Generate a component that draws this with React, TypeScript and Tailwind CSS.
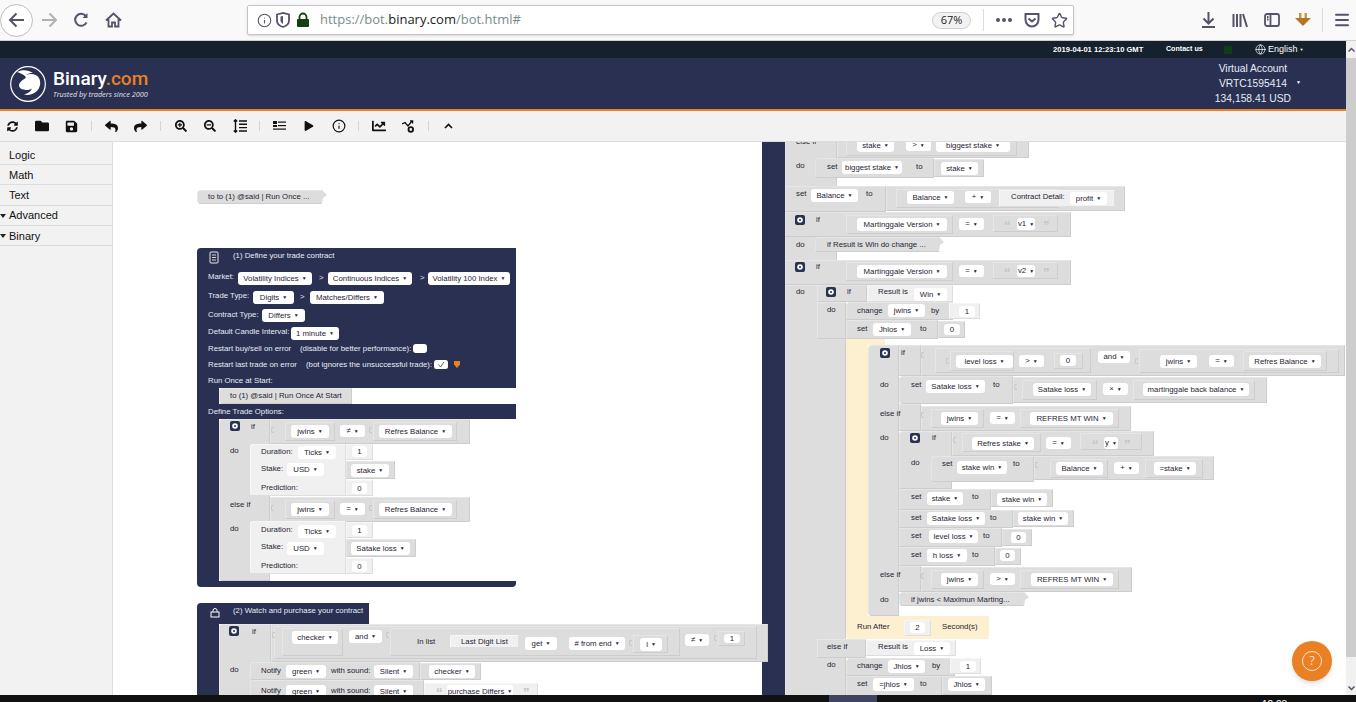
import type { ReactNode } from "react";
import { Info, Star, Menu, Globe } from "lucide-react";
import {
  FaSyncAlt,
  FaFolder,
  FaSave,
  FaReply,
  FaShare,
  FaSearchPlus,
  FaSearchMinus,
  FaPlay,
  FaChartLine,
} from "react-icons/fa";

type BlockNode =
  | { kind: "gray" | "light" | "navy" | "yellow"; x: number; y: number; x2: number; y2: number; cls?: string }
  | { kind: "field"; x: number; y: number; x2: number; text: string; h: number; plain?: boolean }
  | { kind: "text"; x: number; y: number; text: string; cls?: string }
  | { kind: "gear" | "socket" | "jag"; x: number; y: number; fill?: string };

const OX = 113;
const OY = 142;

function gray(x: number, y: number, x2: number, y2: number, cls?: string): BlockNode {
  return { kind: "gray", x, y, x2, y2, cls };
}
function light(x: number, y: number, x2: number, y2: number, cls?: string): BlockNode {
  return { kind: "light", x, y, x2, y2, cls };
}
function navy(x: number, y: number, x2: number, y2: number, cls?: string): BlockNode {
  return { kind: "navy", x, y, x2, y2, cls };
}
function field(x: number, x2: number, y: number, text: string, h = 13): BlockNode {
  return { kind: "field", x, x2, y, text, h };
}
function num(x: number, x2: number, y: number, text: string, h = 11): BlockNode {
  return { kind: "field", x, x2, y, text, h, plain: true };
}
function t(x: number, y: number, text: string, cls?: string): BlockNode {
  return { kind: "text", x, y, text, cls };
}
function w(x: number, y: number, text: string): BlockNode {
  return t(x, y, text, "text-[#e6edf5]");
}
function q(x: number, y: number, text: string): BlockNode {
  return t(x, y + 3, text, "text-[#c4c4c4] font-bold text-[13px]!");
}
function gear(x: number, y: number): BlockNode {
  return { kind: "gear", x, y };
}
function socket(x: number, y: number): BlockNode {
  return { kind: "socket", x, y };
}
function jag(x: number, y: number, fill = "#dddddd"): BlockNode {
  return { kind: "jag", x, y, fill };
}

const compareRow = (y: number, op: string): BlockNode[] => [
  gray(270, y, 470, y + 25),
  socket(271, y + 8),
  gray(285, y + 3, 335, y + 22),
  field(291, 329, y + 6, "jwins"),
  field(340, 365, y + 6, op, 12),
  socket(369, y + 8),
  gray(373, y + 3, 457, y + 22),
  field(379, 452, y + 6, "Refres Balance"),
];

const leftNodes: BlockNode[] = [
  // column of the block that sits behind the long if row
  navy(762, 130, 785, 700),

  // loose collapsed block
  gray(197, 190, 322, 204, "rounded-l-[4px]"),
  jag(321, 190),
  t(208, 197, "to to (1) @said | Run Once ..."),

  // (1) define contract
  navy(197, 248, 516, 388, "rounded-tl-[4px]"),
  navy(197, 388, 219, 581),
  navy(197, 404, 516, 419),
  navy(197, 581, 516, 587, "rounded-b-[4px]"),
  w(233, 256, "(1) Define your trade contract"),
  w(208, 277, "Market:"),
  field(238, 312, 272, "Volatility Indices"),
  w(319, 278, ">"),
  field(328, 412, 272, "Continuous Indices"),
  w(420, 278, ">"),
  field(428, 510, 272, "Volatility 100 Index"),
  w(208, 296, "Trade Type:"),
  field(253, 294, 291, "Digits"),
  w(300, 297, ">"),
  field(310, 384, 291, "Matches/Differs"),
  w(208, 315, "Contract Type:"),
  field(262, 305, 309, "Differs"),
  w(208, 332, "Default Candle Interval:"),
  field(291, 339, 327, "1 minute"),
  w(208, 349, "Restart buy/sell on error"),
  w(300, 349, "(disable for better performance):"),
  w(208, 365, "Restart last trade on error"),
  w(306, 365, "(bot ignores the unsuccessful trade):"),
  w(208, 381, "Run Once at Start:"),
  gray(219, 388, 352, 404, "rounded-l-[4px]"),
  t(230, 396, "to (1) @said | Run Once At Start"),
  w(208, 412, "Define Trade Options:"),

  // if block inside options
  gray(219, 419, 270, 581, "rounded-l-[4px]"),
  gear(235, 426),
  t(251, 427, "if"),
  ...compareRow(419, "≠"),
  t(230, 451, "do"),
  light(250, 444, 346, 496, "rounded-l-[3px]"),
  t(261, 452, "Duration:"),
  field(298, 336, 446, "Ticks"),
  light(346, 444, 373, 460),
  num(352, 367, 446, "1"),
  t(261, 469, "Stake:"),
  field(287, 324, 463, "USD"),
  gray(346, 461, 395, 479),
  field(351, 389, 464, "stake"),
  t(261, 488, "Prediction:"),
  light(346, 480, 373, 496),
  num(352, 367, 483, "0"),
  t(230, 505, "else if"),
  ...compareRow(497, "="),
  t(230, 529, "do"),
  light(250, 521, 346, 574, "rounded-l-[3px]"),
  t(261, 530, "Duration:"),
  field(298, 336, 525, "Ticks"),
  light(346, 522, 373, 538),
  num(352, 367, 525, "1"),
  t(261, 547, "Stake:"),
  field(287, 324, 542, "USD"),
  gray(346, 539, 416, 557),
  field(351, 410, 542, "Satake loss"),
  t(261, 566, "Prediction:"),
  light(346, 558, 373, 574),
  num(352, 367, 561, "0"),

  // (2) watch and purchase
  navy(197, 603, 369, 624, "rounded-tl-[4px]"),
  navy(197, 624, 219, 700),
  w(233, 611, "(2) Watch and purchase your contract"),
  gray(219, 624, 271, 700, "rounded-tl-[4px]"),
  gear(234, 631),
  t(252, 632, "if"),
  gray(271, 624, 768, 662),
  gray(274, 626, 757, 659),
  socket(272, 632),
  gray(282, 628, 343, 656),
  field(292, 338, 631, "checker"),
  field(349, 382, 630, "and"),
  socket(386, 632),
  gray(390, 628, 680, 656),
  t(417, 642, "In list"),
  light(450, 635, 519, 648),
  t(461, 642, "Last Digit List"),
  field(525, 557, 637, "get"),
  field(569, 625, 637, "# from end"),
  socket(629, 640),
  gray(633, 635, 668, 653),
  field(640, 662, 638, "l"),
  field(685, 709, 634, "≠", 12),
  socket(714, 635),
  gray(718, 631, 745, 646),
  num(724, 740, 634, "1", 9),
  t(230, 670, "do"),
  gray(250, 662, 420, 680, "rounded-l-[3px]"),
  t(261, 671, "Notify"),
  field(286, 326, 665, "green"),
  t(331, 671, "with sound:"),
  field(374, 413, 665, "Silent"),
  gray(420, 663, 481, 680),
  field(429, 475, 665, "checker"),
  gray(250, 680, 424, 700, "rounded-l-[3px]"),
  t(261, 691, "Notify"),
  field(286, 326, 685, "green"),
  t(331, 691, "with sound:"),
  field(374, 413, 685, "Silent"),
  light(424, 683, 538, 700),
  q(436, 689, "“"),
  field(447, 513, 685, "purchase Differs"),
  q(523, 689, "”"),
];

const rightNodes: BlockNode[] = [
  gray(785, 130, 837, 285),
  gray(785, 285, 846, 700),

  // else if stake > biggest stake
  gray(837, 130, 1029, 158),
  gray(846, 130, 1017, 156),
  t(796, 142, "else if"),
  field(857, 894, 139, "stake"),
  field(906, 931, 139, ">", 12),
  field(936, 1010, 139, "biggest stake"),
  t(796, 166, "do"),
  gray(815, 158, 934, 178, "rounded-l-[4px]"),
  t(827, 167, "set"),
  field(842, 902, 161, "biggest stake"),
  t(916, 167, "to"),
  gray(934, 159, 984, 177),
  field(941, 978, 162, "stake"),

  // set Balance
  gray(785, 186, 886, 212),
  t(796, 194, "set"),
  field(811, 858, 189, "Balance"),
  t(866, 194, "to"),
  gray(886, 186, 1125, 211),
  gray(896, 189, 1059, 208),
  field(907, 954, 191, "Balance"),
  field(965, 991, 191, "+", 12),
  light(999, 190, 1115, 207),
  t(1011, 197, "Contract Detail:"),
  field(1070, 1107, 192, "profit"),

  // martingale v1
  gray(785, 212, 1071, 237),
  gear(800, 220),
  t(816, 220, "if"),
  gray(846, 215, 953, 234),
  field(857, 947, 218, "Martinggale Version"),
  field(959, 984, 218, "=", 12),
  gray(993, 215, 1058, 232),
  q(1004, 222, "“"),
  field(1017, 1035, 218, "v1", 12),
  q(1043, 222, "”"),
  t(796, 245, "do"),
  gray(815, 237, 939, 252, "rounded-l-[4px]"),
  jag(938, 237),
  t(827, 245, "if Result is Win do change ..."),

  // martingale v2
  gray(785, 260, 1071, 285),
  gear(800, 267),
  t(816, 267, "if"),
  gray(846, 262, 953, 281),
  field(857, 947, 265, "Martinggale Version"),
  field(959, 984, 265, "=", 12),
  gray(993, 262, 1058, 279),
  q(1004, 269, "“"),
  field(1017, 1035, 265, "v2", 12),
  q(1043, 269, "”"),
  t(796, 292, "do"),
  gray(817, 285, 867, 302, "rounded-tl-[4px]"),
  gray(817, 302, 846, 339),
  gear(831, 292),
  t(847, 292, "if"),
  light(867, 285, 953, 302),
  t(878, 292, "Result is"),
  field(914, 947, 288, "Win"),
  t(827, 310, "do"),
  gray(846, 302, 953, 320, "rounded-tl-[4px]"),
  t(857, 311, "change"),
  field(888, 925, 304, "jwins"),
  t(931, 311, "by"),
  light(949, 303, 980, 319),
  num(959, 975, 306, "1"),
  gray(846, 320, 938, 339),
  t(857, 329, "set"),
  field(873, 911, 323, "Jhlos"),
  t(920, 329, "to"),
  gray(938, 321, 965, 338),
  num(944, 960, 324, "0"),

  // yellow wrapper
  { kind: "yellow", x: 846, y: 339, x2: 885, y2: 345 },
  { kind: "yellow", x: 846, y: 345, x2: 868, y2: 616 },
  { kind: "yellow", x: 846, y: 616, x2: 989, y2: 639, cls: "rounded-bl-[4px]" },
  t(857, 627, "Run After"),
  light(904, 620, 931, 636),
  num(910, 925, 622, "2"),
  t(942, 627, "Second(s)"),

  // nested if
  gray(868, 345, 899, 616, "rounded-l-[4px]"),
  gray(899, 345, 921, 376),
  gray(899, 404, 921, 431),
  gray(899, 566, 921, 592),
  gear(885, 353),
  t(901, 353, "if"),
  gray(921, 345, 1345, 376),
  socket(921, 352),
  gray(935, 348, 1091, 373),
  socket(946, 358),
  gray(950, 351, 1014, 371),
  field(956, 1013, 355, "level loss"),
  field(1019, 1044, 355, ">", 12),
  gray(1054, 353, 1083, 369),
  num(1060, 1076, 355, "0"),
  field(1098, 1130, 351, "and", 12),
  socket(1135, 358),
  gray(1139, 349, 1339, 373),
  field(1160, 1197, 355, "jwins"),
  field(1209, 1234, 355, "=", 12),
  gray(1243, 351, 1327, 371),
  field(1249, 1321, 355, "Refres Balance"),
  t(880, 385, "do"),
  gray(899, 376, 1013, 404, "rounded-l-[4px]"),
  t(911, 385, "set"),
  field(926, 985, 380, "Satake loss"),
  t(993, 385, "to"),
  gray(1013, 377, 1267, 403),
  socket(1014, 384),
  gray(1022, 380, 1097, 400),
  field(1033, 1091, 383, "Satake loss"),
  field(1103, 1128, 383, "×", 12),
  gray(1133, 380, 1255, 400),
  field(1143, 1249, 383, "martinggale back balance"),
  t(880, 414, "else if"),
  gray(921, 406, 1131, 431),
  socket(921, 412),
  gray(931, 409, 984, 428),
  field(941, 978, 412, "jwins"),
  field(990, 1015, 412, "=", 12),
  gray(1020, 409, 1119, 428),
  field(1030, 1113, 412, "REFRES MT WIN"),
  t(880, 438, "do"),
  gray(899, 431, 952, 489, "rounded-tl-[4px]"),
  gear(915, 438),
  t(932, 438, "if"),
  gray(952, 431, 1154, 456),
  socket(953, 437),
  gray(962, 433, 1041, 452),
  field(972, 1034, 437, "Refres stake"),
  field(1046, 1071, 437, "=", 12),
  gray(1080, 433, 1142, 450),
  q(1092, 441, "“"),
  field(1104, 1118, 437, "y", 12),
  q(1124, 441, "”"),
  t(911, 463, "do"),
  gray(931, 456, 1034, 482, "rounded-l-[4px]"),
  t(942, 464, "set"),
  field(957, 1007, 461, "stake win"),
  t(1013, 464, "to"),
  gray(1034, 456, 1214, 480),
  socket(1035, 462),
  gray(1050, 459, 1108, 478),
  field(1056, 1103, 462, "Balance"),
  field(1114, 1139, 462, "+", 12),
  gray(1145, 459, 1203, 478),
  field(1154, 1196, 462, "=stake"),
  gray(899, 489, 991, 510),
  t(911, 497, "set"),
  field(927, 963, 492, "stake"),
  t(972, 497, "to"),
  gray(991, 489, 1053, 507),
  field(997, 1047, 493, "stake win"),
  gray(899, 510, 1013, 528),
  t(911, 518, "set"),
  field(927, 985, 512, "Satake loss"),
  t(990, 518, "to"),
  gray(1013, 510, 1074, 527),
  field(1018, 1068, 512, "stake win"),
  gray(899, 528, 1002, 547),
  t(911, 536, "set"),
  field(929, 978, 530, "level loss"),
  t(983, 536, "to"),
  gray(1002, 529, 1032, 546),
  num(1011, 1026, 532, "0"),
  gray(899, 547, 995, 566),
  t(911, 555, "set"),
  field(927, 967, 549, "h loss"),
  t(972, 555, "to"),
  gray(995, 548, 1021, 565),
  num(1000, 1015, 550, "0"),
  t(880, 575, "else if"),
  gray(921, 567, 1132, 592),
  socket(921, 573),
  gray(931, 570, 984, 589),
  field(941, 978, 573, "jwins"),
  field(990, 1015, 573, ">", 12),
  gray(1020, 570, 1119, 589),
  field(1031, 1113, 573, "REFRES MT WIN"),
  t(880, 600, "do"),
  gray(899, 592, 1024, 606, "rounded-l-[4px]"),
  jag(1023, 592),
  t(911, 600, "if jwins < Maximun Marting..."),

  // loss branch
  gray(817, 639, 866, 658),
  t(827, 647, "else if"),
  light(866, 640, 956, 656),
  t(878, 647, "Result is"),
  field(914, 950, 642, "Loss"),
  t(827, 665, "do"),
  gray(846, 658, 955, 676, "rounded-tl-[4px]"),
  t(857, 666, "change"),
  field(888, 925, 660, "Jhlos"),
  t(932, 666, "by"),
  light(950, 658, 981, 674),
  num(960, 976, 661, "1"),
  gray(846, 676, 942, 700),
  t(857, 684, "set"),
  field(873, 914, 678, "=jhlos"),
  t(920, 684, "to"),
  gray(942, 676, 992, 695),
  field(948, 985, 678, "Jhlos"),
];

const blockFont = "font-['Liberation_Sans',Arial,sans-serif] text-[7.8px] leading-none";

function BlockShape({ node }: { node: BlockNode }) {
  if (node.kind === "text") {
    return (
      <span
        className={`absolute -translate-y-1/2 whitespace-nowrap ${blockFont} ${node.cls ?? "text-[#1f2433]"}`}
        style={{ left: node.x - OX, top: node.y - OY }}
      >
        {node.text}
      </span>
    );
  }
  if (node.kind === "field") {
    return (
      <span
        className={`absolute flex items-center justify-center gap-[3px] whitespace-nowrap rounded-[3px] bg-white text-[#1f2433] ${blockFont}`}
        style={{ left: node.x - OX, top: node.y - OY, width: node.x2 - node.x, height: node.h }}
      >
        {node.text}
        {node.plain ? null : <span className="text-[5px] leading-none">▼</span>}
      </span>
    );
  }
  if (node.kind === "gear") {
    return (
      <svg
        className="absolute"
        style={{ left: node.x - 5 - OX, top: node.y - 5 - OY }}
        width="10"
        height="10"
        viewBox="0 0 10 10"
      >
        <rect width="10" height="10" rx="2" fill="#2a3052" />
        <circle cx="5" cy="5" r="2.8" fill="#ffffff" />
        <circle cx="5" cy="5" r="1" fill="#2a3052" />
      </svg>
    );
  }
  if (node.kind === "socket") {
    return (
      <span
        className="absolute h-[6px] w-[3px] rounded-l-[2px] border border-r-0 border-[#c8c8c8]"
        style={{ left: node.x - OX, top: node.y - OY }}
      />
    );
  }
  if (node.kind === "jag") {
    return (
      <svg
        className="absolute"
        style={{ left: node.x - OX, top: node.y - OY }}
        width="7"
        height="15"
        viewBox="0 0 7 15"
      >
        <polygon points="0,0 1,0 6,5 2,8 1,14 0,14" fill={node.fill} />
      </svg>
    );
  }
  const skin = {
    gray: "bg-[#dddddd] border border-t-[#e6e6e6] border-l-[#e6e6e6] border-r-[#cdcdcd] border-b-[#cdcdcd]",
    light: "bg-[#f0f0f0] border border-t-[#f6f6f6] border-l-[#f6f6f6] border-r-[#dedede] border-b-[#dedede]",
    navy: "bg-[#2a3052]",
    yellow: "bg-[#fdf0d0]",
  }[node.kind];
  return (
    <div
      className={`absolute ${skin} ${node.cls ?? ""}`}
      style={{ left: node.x - OX, top: node.y - OY, width: node.x2 - node.x, height: node.y2 - node.y }}
    />
  );
}

function Workspace() {
  return (
    <div className="relative flex-1 overflow-hidden bg-white">
      {rightNodes.slice(0, 2).map((n, i) => (
        <BlockShape key={`c${i}`} node={n} />
      ))}
      {leftNodes.map((n, i) => (
        <BlockShape key={i} node={n} />
      ))}
      {rightNodes.slice(2).map((n, i) => (
        <BlockShape key={`r${i}`} node={n} />
      ))}
      <svg className="absolute left-[96px] top-[109px]" width="10" height="13" viewBox="0 0 10 13" fill="none">
        <rect x="1" y="1" width="8" height="11" stroke="#fff" strokeWidth="0.9" rx="1" />
        <path d="M3 4h4M3 6.500h4M3 9h4" stroke="#fff" strokeWidth="0.8" />
      </svg>
      <svg className="absolute left-[97px] top-[466px]" width="10" height="10" viewBox="0 0 10 10" fill="none">
        <rect x="1" y="4" width="8" height="5" stroke="#fff" strokeWidth="1" />
        <path d="M3 4V2.500a2 2 0 0 1 4 0V4" stroke="#fff" strokeWidth="1" />
      </svg>
      <div className="absolute left-[300px] top-[202px] h-[9px] w-[14px] rounded-[3px] bg-white" />
      <svg className="absolute left-[321px] top-[218px]" width="14" height="10" viewBox="0 0 14 10">
        <rect width="14" height="9" rx="2.500" fill="#fff" />
        <path d="M4.500 4.500 6.500 7 10 2" stroke="#555" strokeWidth="0.9" fill="none" />
      </svg>
      <svg className="absolute left-[341px] top-[219px]" width="6" height="7" viewBox="0 0 6 7">
        <path d="M0 0h6v3.500L3 7 0 3.500z" fill="#e98024" />
      </svg>
    </div>
  );
}

function BrowserChrome() {
  const stroke = "#57516b";
  return (
    <div className="flex h-[41px] shrink-0 items-center border-b border-[#cfcfcf] bg-[#f9f9fa]">
      <div className="flex h-[33px] w-[33px] shrink-0 items-center justify-center rounded-full border border-[#bdbdbd] bg-white">
        <svg width="17" height="16" viewBox="0 0 17 16" fill="none" stroke={stroke} strokeWidth="2">
          <path d="M16 8H2M8.500 1.500 2 8l6.500 6.500" />
        </svg>
      </div>
      <div className="flex w-[32px] shrink-0 justify-center">
        <svg width="17" height="16" viewBox="0 0 17 16" fill="none" stroke="#b1b1b3" strokeWidth="2">
          <path d="M1 8h14M8.500 1.500 15 8l-6.500 6.500" />
        </svg>
      </div>
      <div className="flex w-[32px] shrink-0 justify-center">
        <svg width="16" height="16" viewBox="0 0 16 16" fill="none" stroke={stroke} strokeWidth="2">
          <path d="M13.500 10.500A6 6 0 1 1 12.800 4" />
          <path d="M14.500 1v5h-5" fill={stroke} stroke="none" />
        </svg>
      </div>
      <div className="flex w-[32px] shrink-0 justify-center">
        <svg width="17" height="16" viewBox="0 0 17 16" fill="none" stroke={stroke} strokeWidth="1.800">
          <path d="M1 8.500 8.500 1.500l7.500 7M3.500 7v7.500h3.500v-4h3v4h3.500V7" />
        </svg>
      </div>
      <div className="ml-[118px] flex h-[30px] w-[827px] shrink-0 items-center rounded-[2px] border border-[#c4c4c6] bg-white shadow-sm">
        <div className="ml-[8px] flex w-[16px] justify-center">
          <Info size={15} color={stroke} strokeWidth={1.800} />
        </div>
        <svg className="ml-[4px]" width="14" height="16" viewBox="0 0 14 16">
          <path d="M1 2.500 7 1l6 1.500V9c0 3-3 5-6 6-3-1-6-3-6-6z" fill="none" stroke={stroke} strokeWidth="1.800" />
          <path d="M7 4v8c-1.500-.800-2.500-2-2.500-3.500V4.500z" fill={stroke} />
        </svg>
        <svg className="ml-[6px]" width="14" height="16" viewBox="0 0 14 16">
          <path d="M3.500 7V5a3.500 3.500 0 0 1 7 0v2" fill="none" stroke="#12400f" strokeWidth="1.800" />
          <rect x="1" y="7" width="12" height="8" rx="1" fill="#12400f" />
        </svg>
        <span className="ml-[10px] whitespace-nowrap font-['Open_Sans',sans-serif] text-[13px] text-[#7a8c8c]">
          https://bot.<span className="text-[#1c1c1c]">binary.com</span>/bot.html#
        </span>
        <div className="flex-1" />
        <span className="flex h-[17px] w-[39px] shrink-0 items-center justify-center rounded-full border border-[#cfcfcf] bg-[#f2f2f2] font-['Open_Sans',sans-serif] text-[11px] text-[#222222]">
          67%
        </span>
        <div className="ml-[12px] h-[22px] w-px shrink-0 bg-[#dcdcdc]" />
        <div className="ml-[12px] flex w-[16px] shrink-0 justify-center gap-[2px]">
          <span className="h-[4px] w-[4px] shrink-0 rounded-full bg-[#57516b]" />
          <span className="h-[4px] w-[4px] shrink-0 rounded-full bg-[#57516b]" />
          <span className="h-[4px] w-[4px] shrink-0 rounded-full bg-[#57516b]" />
        </div>
        <svg className="ml-[12px] shrink-0" width="16" height="15" viewBox="0 0 16 15" fill="none" stroke={stroke} strokeWidth="2">
          <path d="M1.500 1h13v5.500a6.500 7 0 0 1-13 0z" />
          <path d="m4.500 5.500 3.500 3 3.500-3" />
        </svg>
        <div className="ml-[11px] mr-[5px] shrink-0">
          <Star size={17} color={stroke} strokeWidth={2} />
        </div>
      </div>
      <div className="ml-[118px] flex w-[32px] shrink-0 justify-center">
        <svg width="15" height="16" viewBox="0 0 15 16" fill="none" stroke={stroke} strokeWidth="2">
          <path d="M7.500 0v11M2.500 6.500l5 5 5-5M1 15h13" />
        </svg>
      </div>
      <div className="flex w-[32px] shrink-0 justify-center">
        <svg width="16" height="15" viewBox="0 0 16 15" fill="none" stroke={stroke} strokeWidth="2">
          <path d="M1.500 1v13M5 1v13M8.500 1v13M11 1l4 13" />
        </svg>
      </div>
      <div className="flex w-[31px] shrink-0 justify-center">
        <svg width="16" height="14" viewBox="0 0 16 14" fill="none" stroke={stroke} strokeWidth="1.800">
          <rect x="1" y="1" width="14" height="12" rx="2" />
          <path d="M6.500 1v12M3 4h1.500M3 6.500h1.500" />
        </svg>
      </div>
      <div className="flex w-[32px] shrink-0 justify-center">
        <svg width="16" height="16" viewBox="0 0 16 16">
          <path d="M0 6h16l-8 8z" fill="#b5761f" />
          <path d="M4 1h2.500v5H4zM9.500 1H12v5H9.500z" fill="#c99545" />
        </svg>
      </div>
      <div className="ml-[3px] h-[24px] w-px shrink-0 bg-[#dcdcdc]" />
      <div className="flex w-[38px] shrink-0 justify-center">
        <Menu size={18} color={stroke} strokeWidth={2.500} />
      </div>
    </div>
  );
}

function Logo() {
  return (
    <svg width="38" height="38" viewBox="0 0 38 38">
      <circle cx="19" cy="19" r="17.300" fill="none" stroke="#ffffff" strokeWidth="1.200" />
      <path
        d="M8 7c5-3 12-2 16 1-3 0-5 .500-7 2 5-2 11-.500 13 3 3 6 0 12-4 14.500-3 2-7 3-11 2 4-1 7-3 8-6-2 1.500-6 2-8 1-3 0-5-2-5-4 0-3 3-5 6-7 1-.800 1-1.500 0-2.500C14 9 11 8 8 7z"
        fill="#ffffff"
      />
    </svg>
  );
}

function IconButton({ children }: { children: ReactNode }) {
  return <div className="flex w-[20px] justify-center text-[#111111]">{children}</div>;
}

function ToolSep() {
  return <div className="h-[10px] w-px bg-[#d4d4d4]" />;
}

function Toolbar() {
  return (
    <div className="flex h-[31px] shrink-0 items-center gap-[9.500px] border-b border-[#dddddd] bg-[#f2f2f2] pl-[2px]">
      <IconButton><FaSyncAlt size={11} /></IconButton>
      <IconButton><FaFolder size={14} /></IconButton>
      <IconButton><FaSave size={13} /></IconButton>
      <ToolSep />
      <IconButton><FaReply size={13} /></IconButton>
      <IconButton><FaShare size={13} /></IconButton>
      <ToolSep />
      <IconButton><FaSearchPlus size={12} /></IconButton>
      <IconButton><FaSearchMinus size={12} /></IconButton>
      <IconButton>
        <svg width="14" height="14" viewBox="0 0 14 14" fill="none" stroke="#111" strokeWidth="1.400">
          <path d="M2.500 1v12M.8 2.500 2.500.8l1.700 1.700M.8 11.500l1.700 1.700 1.700-1.700M6 2h8M6 5.300h8M6 8.600h8M6 12h8" />
        </svg>
      </IconButton>
      <ToolSep />
      <IconButton>
        <svg width="13" height="10" viewBox="0 0 13 10" fill="#111">
          <rect x="0" y="0" width="4" height="3" />
          <rect x="5" y="0.500" width="8" height="1.200" />
          <rect x="0" y="4" width="4" height="2" />
          <rect x="5" y="4" width="8" height="1.200" />
          <rect x="0" y="7.500" width="13" height="1.200" />
        </svg>
      </IconButton>
      <IconButton><FaPlay size={10} /></IconButton>
      <IconButton><Info size={14} color="#111" strokeWidth={2} /></IconButton>
      <ToolSep />
      <IconButton><FaChartLine size={14} /></IconButton>
      <IconButton>
        <svg width="13" height="13" viewBox="0 0 13 13" fill="none" stroke="#111" strokeWidth="1.300">
          <path d="M0 4 3 2.500l3 3.500L10 1M8 .8h2.600v2.600" />
          <circle cx="8.800" cy="9.500" r="2.300" strokeWidth="1.800" />
        </svg>
      </IconButton>
      <ToolSep />
      <IconButton>
        <svg width="9" height="6" viewBox="0 0 9 6" fill="none" stroke="#111" strokeWidth="1.600">
          <path d="m1 5 3.500-3.500L8 5" />
        </svg>
      </IconButton>
    </div>
  );
}

function Sidebar() {
  const rows = [
    { name: "Logic", caret: false },
    { name: "Math", caret: false },
    { name: "Text", caret: false },
    { name: "Advanced", caret: true },
    { name: "Binary", caret: true },
  ];
  return (
    <div className="w-[113px] shrink-0 border-r border-[#dddddd] bg-[#f2f2f2] pt-[3px] font-['Liberation_Sans',Arial,sans-serif] text-[11px] text-[#111111]">
      {rows.map((row) => (
        <div key={row.name} className="flex h-[20.200px] items-center border-b border-[#dddddd] pt-[1px]">
          <span className="flex w-[9px] justify-start">
            {row.caret ? (
              <svg width="6" height="4" viewBox="0 0 6 4">
                <path d="M0 0h6L3 4z" fill="#222" />
              </svg>
            ) : null}
          </span>
          {row.name}
        </div>
      ))}
    </div>
  );
}

export default function App() {
  return (
    <div className="relative flex h-[702px] w-[1356px] flex-col overflow-hidden bg-white">
      <BrowserChrome />
      <div className="flex min-h-0 flex-1">
        <div className="flex min-w-0 flex-1 flex-col">
          <div className="flex h-[17px] shrink-0 items-center bg-[#15212d] font-['Liberation_Sans',Arial,sans-serif] text-white">
            <span className="ml-[1053px] w-[113px] whitespace-nowrap text-[7.600px] font-bold">2019-04-01 12:23:10 GMT</span>
            <span className="w-[58px] whitespace-nowrap text-[7.100px] font-bold">Contact us</span>
            <span className="h-[8px] w-[8px] rounded-[1px] bg-[#0d3d1a]" />
            <Globe className="ml-[23px]" size={11} color="#ffffff" strokeWidth={1.500} />
            <span className="ml-[2px] whitespace-nowrap text-[9px]">English</span>
            <span className="ml-[2px] text-[4px]">▼</span>
          </div>
          <div className="relative flex h-[51px] shrink-0 items-center justify-between bg-[#2a3052] pl-[9px] pr-[55px]">
            <div className="flex items-center gap-[6px]">
              <Logo />
              <div className="flex flex-col">
                <span className="font-['Roboto',sans-serif] text-[19px] font-medium leading-[22px] text-white">
                  Binary<span className="text-[#e98024]">.com</span>
                </span>
                <span className="font-['Open_Sans',sans-serif] text-[7.300px] italic leading-[9px] text-[#e4e4e4]">
                  Trusted by traders since 2000
                </span>
              </div>
            </div>
            <div className="flex flex-col items-center font-['Liberation_Sans',Arial,sans-serif] text-[10.300px] leading-[15px] text-[#e4eef8]">
              <span>Virtual Account</span>
              <span>VRTC1595414</span>
              <span>134,158.41 USD</span>
            </div>
            <span className="absolute left-[1296px] top-[21px] text-[5px] text-white">▼</span>
          </div>
          <div className="h-[2px] shrink-0 bg-[#e98024]" />
          <Toolbar />
          <div className="flex min-h-0 flex-1">
            <Sidebar />
            <Workspace />
          </div>
        </div>
        <div className="flex w-[10px] shrink-0 flex-col bg-[#f1f1f1]">
          <div className="flex h-[17px] items-center justify-center">
            <svg width="7" height="5" viewBox="0 0 7 5" fill="none" stroke="#57516b" strokeWidth="1.500">
              <path d="m.5 4.500 3-3 3 3" />
            </svg>
          </div>
          <div className="h-[599px] bg-[#cdcdcd]" />
          <div className="flex-1" />
          <div className="flex h-[14px] items-center justify-center">
            <svg width="7" height="5" viewBox="0 0 7 5" fill="none" stroke="#57516b" strokeWidth="1.500">
              <path d="m.5.500 3 3 3-3" />
            </svg>
          </div>
        </div>
      </div>
      <div className="flex h-[7px] shrink-0 overflow-hidden bg-[#111111]">
        <div className="ml-[829px] h-full w-[48px] bg-[#3f4560]" />
        <span className="ml-[385px] mt-[5px] font-['Liberation_Sans',Arial,sans-serif] text-[10px] leading-none text-white">12:23</span>
      </div>
      <button
        type="button"
        className="absolute left-[1292px] top-[641px] flex h-[40px] w-[40px] items-center justify-center rounded-full bg-[#e98024] shadow-md"
      >
        <span className="flex h-[20px] w-[20px] items-center justify-center rounded-full border border-[#fbe3cc] font-['Open_Sans',sans-serif] text-[12px] text-[#fbe3cc]">
          ?
        </span>
      </button>
    </div>
  );
}
